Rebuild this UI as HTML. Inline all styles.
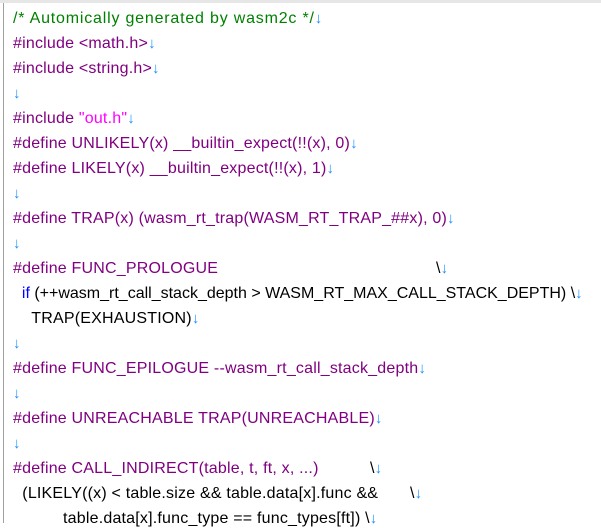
<!DOCTYPE html><html><head><style>
body{margin:0;width:601px;height:523px;overflow:hidden;background:#fff;position:relative;font-family:"Liberation Sans",sans-serif;font-size:16px;letter-spacing:0.2px;}
.top{position:absolute;left:0;top:0;width:601px;height:3px;background:#e6e6e6;}
.lb{position:absolute;left:3px;top:3px;width:1px;height:520px;background:#a0a0a0;}
.l{position:absolute;left:13px;white-space:pre;height:25px;line-height:25px;color:#000;}
.c{color:#008000;letter-spacing:0.8px}.p{color:#800080}.s{color:#ff00ff}.k{color:#0000ff}
.a{color:#1e90ff;font-size:15px;letter-spacing:0}
.bs{position:absolute;white-space:pre;line-height:25px}
</style></head><body>
<div class="top"></div><div class="lb"></div>
<div class="l" style="top:6px"><span class="c">/* Automically generated by wasm2c */</span><span class="a">↓</span></div>
<div class="l" style="top:31px"><span class="p">#include &lt;math.h&gt;</span><span class="a">↓</span></div>
<div class="l" style="top:56px"><span class="p">#include &lt;string.h&gt;</span><span class="a">↓</span></div>
<div class="l" style="top:81px"><span class="a">↓</span></div>
<div class="l" style="top:106px"><span class="p">#include </span><span class="s">"out.h"</span><span class="a">↓</span></div>
<div class="l" style="top:131px"><span class="p">#define UNLIKELY(x) __builtin_expect(!!(x), 0)</span><span class="a">↓</span></div>
<div class="l" style="top:156px"><span class="p">#define LIKELY(x) __builtin_expect(!!(x), 1)</span><span class="a">↓</span></div>
<div class="l" style="top:181px"><span class="a">↓</span></div>
<div class="l" style="top:206px"><span class="p">#define TRAP(x) (wasm_rt_trap(WASM_RT_TRAP_##x), 0)</span><span class="a">↓</span></div>
<div class="l" style="top:231px"><span class="a">↓</span></div>
<div class="l" style="top:256px"><span class="p">#define FUNC_PROLOGUE</span></div>
<div class="bs" style="left:436px;top:256px">\<span class="a">↓</span></div>
<div class="l" style="top:281px;letter-spacing:0">  <span class="k">if</span> (++wasm_rt_call_stack_depth &gt; WASM_RT_MAX_CALL_STACK_DEPTH) \<span class="a">↓</span></div>
<div class="l" style="top:306px">    TRAP(EXHAUSTION)<span class="a">↓</span></div>
<div class="l" style="top:331px"><span class="a">↓</span></div>
<div class="l" style="top:356px"><span class="p">#define FUNC_EPILOGUE --wasm_rt_call_stack_depth</span><span class="a">↓</span></div>
<div class="l" style="top:381px"><span class="a">↓</span></div>
<div class="l" style="top:406px"><span class="p">#define UNREACHABLE TRAP(UNREACHABLE)</span><span class="a">↓</span></div>
<div class="l" style="top:431px"><span class="a">↓</span></div>
<div class="l" style="top:456px"><span class="p">#define CALL_INDIRECT(table, t, ft, x, ...)</span></div>
<div class="bs" style="left:370px;top:456px">\<span class="a">↓</span></div>
<div class="l" style="top:481px">  (LIKELY((x) &lt; table.size &amp;&amp; table.data[x].func &amp;&amp;</div>
<div class="bs" style="left:410px;top:481px">\<span class="a">↓</span></div>
<div class="l" style="top:506px;left:63px">table.data[x].func_type == func_types[ft]) \<span class="a">↓</span></div>
</body></html>
